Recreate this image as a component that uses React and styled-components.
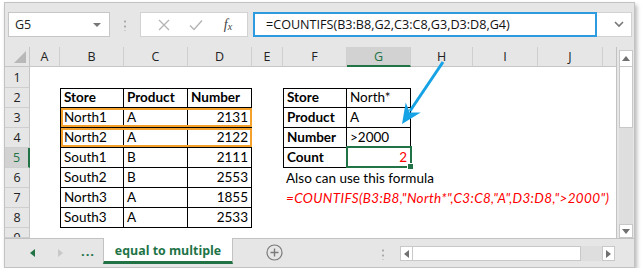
import styled, { createGlobalStyle } from 'styled-components';

const GlobalStyle = createGlobalStyle`
  html, body {
    margin: 0;
    padding: 0;
    background: #ffffff;
  }
  body {
    font-family: "Open Sans", "Noto Sans", sans-serif;
  }
`;

const GREEN = '#217346';
const CELL_FONT = '"Lato", "Liberation Sans", sans-serif';
const UI_FONT = '"Open Sans", "Noto Sans", sans-serif';

const COLS = ['A', 'B', 'C', 'D', 'E', 'F', 'G', 'H', 'I', 'J', ''];

// sheet content: [row, colIndex, text, options]
const CELLS = [
  [2, 1, 'Store', { bold: true }],
  [2, 2, 'Product', { bold: true }],
  [2, 3, 'Number', { bold: true }],
  [3, 1, 'North1'], [3, 2, 'A'], [3, 3, '2131', { right: true }],
  [4, 1, 'North2'], [4, 2, 'A'], [4, 3, '2122', { right: true }],
  [5, 1, 'South1'], [5, 2, 'B'], [5, 3, '2111', { right: true }],
  [6, 1, 'South2'], [6, 2, 'B'], [6, 3, '2553', { right: true }],
  [7, 1, 'North3'], [7, 2, 'A'], [7, 3, '1855', { right: true }],
  [8, 1, 'South3'], [8, 2, 'A'], [8, 3, '2533', { right: true }],
  [2, 5, 'Store', { bold: true }], [2, 6, 'North*'],
  [3, 5, 'Product', { bold: true }], [3, 6, 'A'],
  [4, 5, 'Number', { bold: true }], [4, 6, '>2000'],
  [5, 5, 'Count', { bold: true }], [5, 6, '2', { right: true, red: true }],
  [6, 5, 'Also can use this formula'],
  [7, 5, '=COUNTIFS(B3:B8,"North*",C3:C8,"A",D3:D8,">2000")', { red: true, italic: true }],
];

const TABLES = [
  { r1: 2, r2: 8, c1: 1, c2: 3 },
  { r1: 2, r2: 5, c1: 5, c2: 6 },
];

function edges(r, c) {
  for (const t of TABLES) {
    if (r >= t.r1 && r <= t.r2 && c >= t.c1 && c <= t.c2) {
      return { top: r === t.r1, left: c === t.c1, inside: true };
    }
  }
  return { inside: false };
}

export default function App() {
  const cellMap = {};
  CELLS.forEach(([r, c, text, opt]) => {
    cellMap[r + '-' + c] = { text, ...(opt || {}) };
  });

  const sheetCells = [];
  for (let r = 1; r <= 9; r++) {
    for (let c = 0; c < COLS.length; c++) {
      const data = cellMap[r + '-' + c];
      const e = edges(r, c);
      if (!data && !e.inside) continue;
      sheetCells.push(
        <Cell
          key={r + '-' + c}
          $row={r + 1}
          $col={c + 2}
          $boxed={e.inside}
          $top={e.top}
          $left={e.left}
          $bold={data?.bold}
          $right={data?.right}
          $red={data?.red}
          $italic={data?.italic}
        >
          {data?.text}
        </Cell>
      );
    }
  }

  return (
    <>
      <GlobalStyle />
      <Page>
        <Window>
          <FormulaBar>
            <NameBox>
              <span>G5</span>
              <DropTriangle />
            </NameBox>
            <Grip>
              <Dots />
            </Grip>
            <FxButtons>
              <FxGlyph>
                <svg width="12" height="12" viewBox="0 0 12 12">
                  <path d="M1 1L11 11M11 1L1 11" stroke="#b4b4b4" strokeWidth="1.3" fill="none" />
                </svg>
              </FxGlyph>
              <FxGlyph>
                <svg width="14" height="12" viewBox="0 0 14 12">
                  <path d="M1 6.5L5 10.5L13 1.5" stroke="#b4b4b4" strokeWidth="1.4" fill="none" />
                </svg>
              </FxGlyph>
              <FxGlyph>
                <FxText>f<sub>x</sub></FxText>
              </FxGlyph>
            </FxButtons>
            <FormulaInput>=COUNTIFS(B3:B8,G2,C3:C8,G3,D3:D8,G4)</FormulaInput>
            <FormulaExpand>
              <svg width="10" height="7" viewBox="0 0 10 7">
                <path d="M1 1L5 5L9 1" stroke="#777" strokeWidth="1.6" fill="none" />
              </svg>
            </FormulaExpand>
          </FormulaBar>

          <SheetArea>
            <GridPane>
              <Grid>
                <Corner>
                  <svg width="14" height="14" viewBox="0 0 14 14">
                    <path d="M13 1L13 13L1 13Z" fill="#b8b8b8" />
                  </svg>
                </Corner>
                {COLS.map((name, i) => (
                  <ColHeader key={name + i} $col={i + 2} $selected={name === 'G'} $last={i === COLS.length - 1}>
                    {name}
                  </ColHeader>
                ))}
                {[1, 2, 3, 4, 5, 6, 7, 8, 9].map((n) => (
                  <RowHeader key={n} $row={n + 1} $selected={n === 5} $first={n === 1}>
                    {n}
                  </RowHeader>
                ))}
                {sheetCells}
                <Highlight $row={4} />
                <Highlight $row={5} />
                <ActiveCell $row={6} $col={8}>
                  <FillHandle />
                </ActiveCell>
              </Grid>
              <Arrow width="120" height="100" viewBox="0 0 120 100">
                <line x1="78" y1="15" x2="45" y2="64" stroke="#16a3e6" strokeWidth="3" />
                <path d="M37 77L40.7 55.4L44.8 65.4L55.7 65.4Z" fill="#16a3e6" />
              </Arrow>
            </GridPane>
            <VScroll>
              <ScrollButton $h={17}>
                <svg width="8" height="5" viewBox="0 0 8 5"><path d="M0 5L4 0L8 5Z" fill="#707070" /></svg>
              </ScrollButton>
              <VThumb />
              <VTrack />
              <ScrollButton $h={14}>
                <svg width="8" height="5" viewBox="0 0 8 5"><path d="M0 0L4 5L8 0Z" fill="#707070" /></svg>
              </ScrollButton>
            </VScroll>
          </SheetArea>

          <TabBar>
            <TabNav>
              <NavItem>
                <svg width="5" height="8" viewBox="0 0 5 8"><path d="M5 0L0 4L5 8Z" fill={GREEN} /></svg>
              </NavItem>
              <NavItem>
                <svg width="5" height="8" viewBox="0 0 5 8"><path d="M0 0L5 4L0 8Z" fill="#c8c8c8" /></svg>
              </NavItem>
              <NavItem $text>...</NavItem>
            </TabNav>
            <SheetTab>equal to multiple</SheetTab>
            <AddSheet>
              <svg width="17" height="17" viewBox="0 0 17 17">
                <circle cx="8.5" cy="8.5" r="7.5" stroke="#7a7a7a" strokeWidth="1.2" fill="none" />
                <path d="M8.5 4.5V12.5M4.5 8.5H12.5" stroke="#7a7a7a" strokeWidth="1.4" />
              </svg>
            </AddSheet>
            <TabGrip>
              <Dots />
            </TabGrip>
            <HScroll>
              <HButton>
                <svg width="5" height="8" viewBox="0 0 5 8"><path d="M5 0L0 4L5 8Z" fill="#707070" /></svg>
              </HButton>
              <HThumb />
              <HTrack />
              <HButton>
                <svg width="5" height="8" viewBox="0 0 5 8"><path d="M0 0L5 4L0 8Z" fill="#707070" /></svg>
              </HButton>
            </HScroll>
          </TabBar>
        </Window>
      </Page>
    </>
  );
}

const Page = styled.div`
  padding: 2px 0 0 4px;
`;

const Window = styled.div`
  width: 631px;
  height: 266px;
  box-sizing: border-box;
  background: #e6e6e6;
  border: 1px solid #c2c2c2;
  box-shadow: 2px 3px 4px rgba(0, 0, 0, 0.28);
  display: flex;
  flex-direction: column;
  overflow: hidden;
`;

const FormulaBar = styled.div`
  display: flex;
  align-items: stretch;
  height: 25px;
  margin: 9px 2px 10px 3px;
  flex-shrink: 0;
`;

const NameBox = styled.div`
  width: 102px;
  box-sizing: border-box;
  background: #fff;
  border: 1px solid #c6c6c6;
  display: flex;
  align-items: center;
  justify-content: space-between;
  padding: 0 8px 0 6px;
  font-family: ${UI_FONT};
  font-size: 12.5px;
  color: #222;
`;

const DropTriangle = styled.span`
  width: 0;
  height: 0;
  border-left: 4px solid transparent;
  border-right: 4px solid transparent;
  border-top: 4px solid #777;
`;

const Grip = styled.div`
  width: 30px;
  display: flex;
  align-items: center;
  justify-content: center;
`;

const Dots = styled.span`
  width: 2px;
  height: 12px;
  background-image: radial-gradient(circle, #a8a8a8 1px, transparent 1.2px);
  background-size: 2px 5px;
  background-position: 0 0;
`;

const FxButtons = styled.div`
  width: 108px;
  box-sizing: border-box;
  background: #fff;
  border: 1px solid #d2d2d2;
  display: flex;
  align-items: center;
  justify-content: space-between;
  padding: 0 10px 0 14px;
`;

const FxGlyph = styled.span`
  display: flex;
  align-items: center;
  justify-content: center;
  width: 18px;
  height: 18px;
`;

const FxText = styled.span`
  font-family: "Liberation Serif", "DejaVu Serif", serif;
  font-style: italic;
  font-size: 14px;
  color: #444;
  line-height: 1;
  sub {
    font-size: 10px;
    vertical-align: -1px;
  }
`;

const FormulaInput = styled.div`
  width: 344px;
  margin-left: 5px;
  box-sizing: border-box;
  background: #fff;
  border: 2px solid #2e9be0;
  display: flex;
  align-items: center;
  padding-left: 11px;
  font-family: ${UI_FONT};
  font-size: 12.6px;
  color: #111;
  white-space: nowrap;
`;

const FormulaExpand = styled.div`
  width: 35px;
  box-sizing: border-box;
  background: #fff;
  border: 1px solid #d2d2d2;
  border-left: none;
  display: flex;
  align-items: center;
  justify-content: flex-end;
  padding-right: 7px;
`;

const SheetArea = styled.div`
  display: flex;
  height: 191px;
  flex-shrink: 0;
`;

const GridPane = styled.div`
  position: relative;
  width: 612px;
  box-sizing: border-box;
  border-right: 1px solid #c2c2c2;
  overflow: hidden;
`;

const Grid = styled.div`
  display: grid;
  grid-template-columns: 25px 30px 64px 64px 64px 31px 64px 64px 62px 65px 65px 13px;
  grid-template-rows: 20px 21px repeat(7, 20px) 10px;
  background: #fff;
  height: 191px;
  overflow: hidden;
`;

const Corner = styled.div`
  grid-row: 1;
  grid-column: 1;
  background: #e6e6e6;
  border-right: 1px solid #c6c6c6;
  border-bottom: 1px solid #c6c6c6;
  display: flex;
  align-items: flex-end;
  justify-content: flex-end;
  padding: 0 2px 2px 0;
`;

const ColHeader = styled.div`
  grid-row: 1;
  grid-column: ${(p) => p.$col};
  box-sizing: border-box;
  background: ${(p) => (p.$selected ? '#d2d2d2' : '#e6e6e6')};
  color: ${(p) => (p.$selected ? GREEN : '#222')};
  border-right: ${(p) => (p.$last ? 'none' : '1px solid #cfcfcf')};
  border-bottom: ${(p) => (p.$selected ? `2px solid ${GREEN}` : '1px solid #c6c6c6')};
  font-family: ${UI_FONT};
  font-size: 12.5px;
  display: flex;
  align-items: center;
  justify-content: center;
`;

const RowHeader = styled.div`
  grid-row: ${(p) => p.$row};
  grid-column: 1;
  box-sizing: border-box;
  background: ${(p) => (p.$selected ? '#d2d2d2' : '#e6e6e6')};
  color: ${(p) => (p.$selected ? GREEN : '#222')};
  border-right: ${(p) => (p.$selected ? `2px solid ${GREEN}` : '1px solid #c6c6c6')};
  border-bottom: 1px solid #cfcfcf;
  font-family: ${UI_FONT};
  font-size: 12.5px;
  line-height: ${(p) => (p.$first ? '21px' : '19px')};
  text-align: center;
  overflow: hidden;
`;

const Cell = styled.div`
  grid-row: ${(p) => p.$row};
  grid-column: ${(p) => p.$col};
  box-sizing: border-box;
  min-width: 0;
  display: flex;
  align-items: flex-end;
  justify-content: ${(p) => (p.$right ? 'flex-end' : 'flex-start')};
  padding: 0 3px 1px 3px;
  border-top: ${(p) => (p.$boxed && p.$top ? '1px solid #000' : 'none')};
  border-left: ${(p) => (p.$boxed && p.$left ? '1px solid #000' : 'none')};
  border-right: ${(p) => (p.$boxed ? '1px solid #000' : 'none')};
  border-bottom: ${(p) => (p.$boxed ? '1px solid #000' : 'none')};
  font-family: ${CELL_FONT};
  font-size: 13.5px;
  line-height: 17px;
  font-weight: ${(p) => (p.$bold ? 700 : 400)};
  font-style: ${(p) => (p.$italic ? 'italic' : 'normal')};
  letter-spacing: ${(p) => (p.$italic ? '0.35px' : '0')};
  color: ${(p) => (p.$red ? '#ff0000' : '#000')};
  white-space: nowrap;
  overflow: visible;
`;

const Highlight = styled.div`
  grid-row: ${(p) => p.$row};
  grid-column: 3 / 6;
  margin: 0 0 1px 1px;
  border: 2px solid #f4a12c;
  pointer-events: none;
`;

const ActiveCell = styled.div`
  grid-row: ${(p) => p.$row};
  grid-column: ${(p) => p.$col};
  position: relative;
  margin: -2px -1px 0 -1px;
  border: 2px solid ${GREEN};
`;

const FillHandle = styled.span`
  position: absolute;
  right: -4px;
  bottom: -4px;
  width: 5px;
  height: 5px;
  background: ${GREEN};
  border: 1px solid #fff;
`;

const Arrow = styled.svg`
  position: absolute;
  left: 360px;
  top: 0;
  overflow: visible;
`;

const VScroll = styled.div`
  width: 14px;
  margin: 3px 0 0 2px;
  display: flex;
  flex-direction: column;
  background: #dedede;
`;

const ScrollButton = styled.div`
  height: ${(p) => p.$h}px;
  box-sizing: border-box;
  background: #fff;
  border: 1px solid #c8c8c8;
  display: flex;
  align-items: center;
  justify-content: center;
  flex-shrink: 0;
`;

const VThumb = styled.div`
  height: 61px;
  box-sizing: border-box;
  background: #fff;
  border: 1px solid #c8c8c8;
  border-top: none;
`;

const VTrack = styled.div`
  flex: 1;
`;

const TabBar = styled.div`
  flex: 1;
  display: flex;
  align-items: flex-start;
  border-top: 1px solid #c2c2c2;
  background: #e6e6e6;
`;

const TabNav = styled.div`
  display: flex;
  padding-left: 13px;
  margin-right: 1px;
  height: 27px;
  align-items: center;
`;

const NavItem = styled.div`
  width: 28px;
  display: flex;
  justify-content: center;
  align-items: center;
  font-family: ${UI_FONT};
  font-weight: 700;
  font-size: 13px;
  color: ${GREEN};
  letter-spacing: 1px;
  line-height: 1;
  padding-bottom: ${(p) => (p.$text ? '3px' : '0')};
`;

const SheetTab = styled.div`
  width: 130px;
  height: 26px;
  margin-top: -1px;
  box-sizing: border-box;
  background: #fff;
  border-left: 1px solid #c2c2c2;
  border-right: 1px solid #c2c2c2;
  border-bottom: 3px solid ${GREEN};
  display: flex;
  align-items: center;
  justify-content: center;
  font-family: ${UI_FONT};
  font-weight: 700;
  font-size: 12.4px;
  color: ${GREEN};
  padding-top: 1px;
`;

const AddSheet = styled.div`
  margin: 5px 0 0 33px;
  width: 17px;
  height: 17px;
  display: flex;
`;

const TabGrip = styled.div`
  margin: 7px 0 0 96px;
  width: 8px;
  height: 16px;
  display: flex;
  justify-content: center;
  align-items: center;
`;

const HScroll = styled.div`
  margin: 7px 0 0 13px;
  width: 215px;
  height: 15px;
  display: flex;
  background: #dedede;
`;

const HButton = styled.div`
  width: 13px;
  box-sizing: border-box;
  background: #fff;
  border: 1px solid #c8c8c8;
  display: flex;
  align-items: center;
  justify-content: center;
  flex-shrink: 0;
`;

const HThumb = styled.div`
  width: 168px;
  box-sizing: border-box;
  background: #fff;
  border: 1px solid #c8c8c8;
  border-left: none;
`;

const HTrack = styled.div`
  flex: 1;
`;
